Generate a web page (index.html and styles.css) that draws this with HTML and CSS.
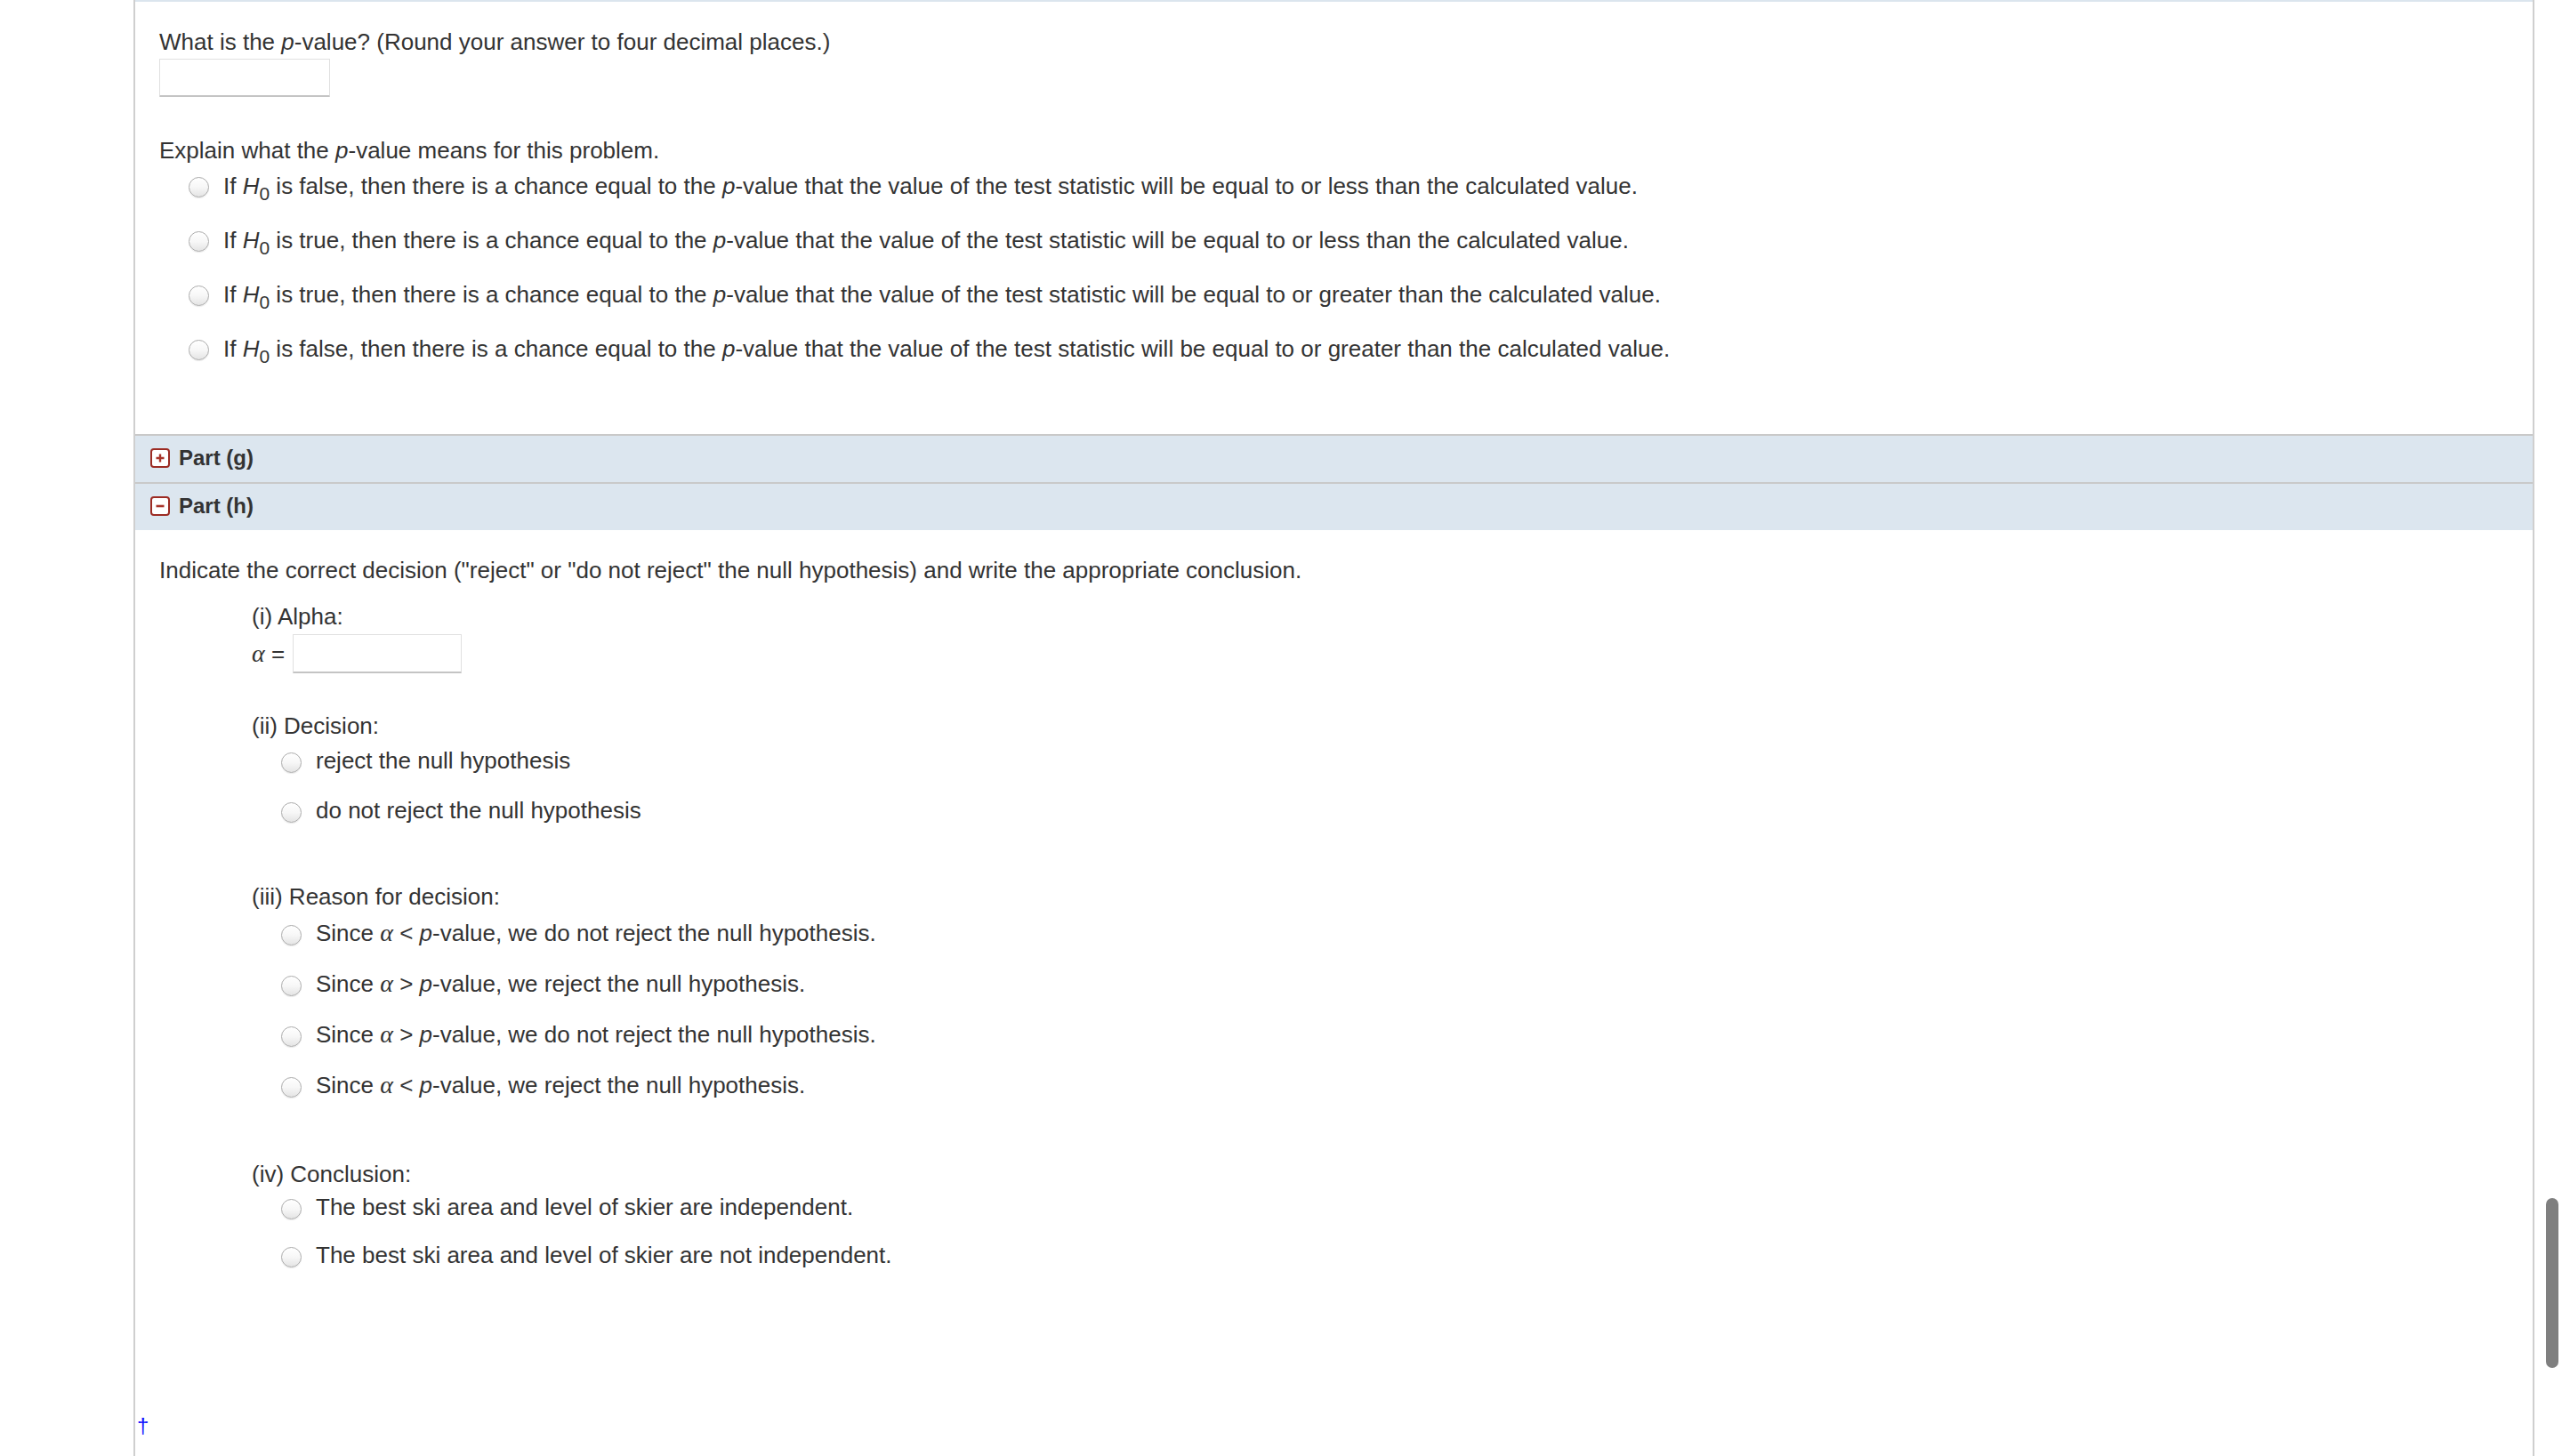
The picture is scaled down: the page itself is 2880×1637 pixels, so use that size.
FILE: index.html
```html
<!DOCTYPE html>
<html lang="en">
<head>
<meta charset="utf-8">
<title>Part (h)</title>
<link rel="stylesheet" href="styles.css">
</head>
<body>
<div class="frame">
  <div class="topstrip"></div>

  <section class="part-body first">
    <p class="line">What is the <i>p</i>-value? (Round your answer to four decimal places.)</p>
    <input class="answer answer-p" type="text" aria-label="p-value">
    <p class="line explain">Explain what the <i>p</i>-value means for this problem.</p>
    <ul class="opts opts-explain">
      <li class="opt"><input class="radio" type="radio" name="pm"><span>If <i>H</i><sub>0</sub> is false, then there is a chance equal to the <i>p</i>-value that the value of the test statistic will be equal to or less than the calculated value.</span></li>
      <li class="opt"><input class="radio" type="radio" name="pm"><span>If <i>H</i><sub>0</sub> is true, then there is a chance equal to the <i>p</i>-value that the value of the test statistic will be equal to or less than the calculated value.</span></li>
      <li class="opt"><input class="radio" type="radio" name="pm"><span>If <i>H</i><sub>0</sub> is true, then there is a chance equal to the <i>p</i>-value that the value of the test statistic will be equal to or greater than the calculated value.</span></li>
      <li class="opt"><input class="radio" type="radio" name="pm"><span>If <i>H</i><sub>0</sub> is false, then there is a chance equal to the <i>p</i>-value that the value of the test statistic will be equal to or greater than the calculated value.</span></li>
    </ul>
  </section>

  <div class="part-head">
    <svg class="toggle" viewBox="0 0 22 22" width="22" height="22"><rect x="1" y="1" width="20" height="20" rx="3" fill="#fff" stroke="#9c2b23" stroke-width="2"/><path d="M6.5 11h9M11 6.5v9" stroke="#a8342a" stroke-width="2.4" fill="none"/></svg>
    <span class="part-title">Part (g)</span>
  </div>
  <div class="part-head">
    <svg class="toggle" viewBox="0 0 22 22" width="22" height="22"><rect x="1" y="1" width="20" height="20" rx="3" fill="#fff" stroke="#9c2b23" stroke-width="2"/><path d="M6.5 11h9" stroke="#a8342a" stroke-width="2.6" fill="none"/></svg>
    <span class="part-title">Part (h)</span>
  </div>

  <section class="part-body second">
    <p class="line">Indicate the correct decision ("reject" or "do not reject" the null hypothesis) and write the appropriate conclusion.</p>
    <div class="steps">
      <p class="line step-alpha">(i) Alpha:</p>
      <div class="alpha-row">
        <span class="alpha-label"><span class="alpha">α</span> =</span>
        <input class="answer answer-alpha" type="text" aria-label="alpha">
      </div>

      <p class="line step-decision">(ii) Decision:</p>
      <ul class="opts opts-decision">
        <li class="opt"><input class="radio" type="radio" name="dec"><span>reject the null hypothesis</span></li>
        <li class="opt"><input class="radio" type="radio" name="dec"><span>do not reject the null hypothesis</span></li>
      </ul>

      <p class="line step-reason">(iii) Reason for decision:</p>
      <ul class="opts opts-reason">
        <li class="opt"><input class="radio" type="radio" name="rea"><span>Since <span class="alpha">α</span> &lt; <i>p</i>-value, we do not reject the null hypothesis.</span></li>
        <li class="opt"><input class="radio" type="radio" name="rea"><span>Since <span class="alpha">α</span> &gt; <i>p</i>-value, we reject the null hypothesis.</span></li>
        <li class="opt"><input class="radio" type="radio" name="rea"><span>Since <span class="alpha">α</span> &gt; <i>p</i>-value, we do not reject the null hypothesis.</span></li>
        <li class="opt"><input class="radio" type="radio" name="rea"><span>Since <span class="alpha">α</span> &lt; <i>p</i>-value, we reject the null hypothesis.</span></li>
      </ul>

      <p class="line step-concl">(iv) Conclusion:</p>
      <ul class="opts opts-concl">
        <li class="opt"><input class="radio" type="radio" name="con"><span>The best ski area and level of skier are independent.</span></li>
        <li class="opt"><input class="radio" type="radio" name="con"><span>The best ski area and level of skier are not independent.</span></li>
      </ul>
    </div>
  </section>

  <div class="dagger">†</div>
</div>
<div class="scroll-thumb"></div>
</body>
</html>
```

FILE: styles.css
```css
html, body {
  margin: 0;
  padding: 0;
  background: #ffffff;
  overflow: hidden;
}

body {
  font-family: "Liberation Sans", Arial, Helvetica, sans-serif;
  font-size: 26px;
  color: #333333;
}

.frame {
  box-sizing: border-box;
  margin-left: 150px;
  width: 2699px;
  height: 1637px;
  border-left: 2px solid #cfcfcf;
  border-right: 2px solid #cfcfcf;
  overflow: hidden;
}

.topstrip {
  height: 2px;
  background: #dbe5ee;
}

.part-body {
  padding-left: 27px;
}

.part-body.first {
  padding-top: 30px;
  padding-bottom: 81px;
}

.part-body.second {
  padding-top: 30px;
}

.line {
  margin: 0;
  line-height: 30px;
}

i {
  font-style: italic;
}

sub {
  font-size: 21px;
  line-height: 0;
  vertical-align: -7px;
  font-style: normal;
}

.answer {
  display: block;
  box-sizing: border-box;
  margin: 0;
  padding: 0 8px;
  border: 1px solid #e0e0e0;
  border-bottom: 2px solid #c4c4c4;
  border-radius: 1px;
  background: #ffffff;
  font: inherit;
  outline: none;
}

.answer-p {
  margin-top: 4px;
  width: 192px;
  height: 43px;
}

.explain {
  margin-top: 45px;
}

.opts {
  list-style: none;
  margin: 0;
  padding: 0;
}

.opt {
  display: flex;
  align-items: flex-start;
  line-height: 30px;
}

.radio {
  -webkit-appearance: none;
  appearance: none;
  box-sizing: border-box;
  flex: none;
  width: 23px;
  height: 23px;
  margin: 6px 16px 0 33px;
  border: 1px solid #ababab;
  border-radius: 50%;
  background: linear-gradient(#ffffff 0%, #f7f7f7 50%, #e4e4e4 100%);
  box-shadow: inset 0 1px 1px rgba(255, 255, 255, 0.9), 0 1px 1px rgba(0, 0, 0, 0.08);
}

.opts-explain {
  margin-top: 10px;
}

.opts-explain .opt + .opt {
  margin-top: 31px;
}

.opts-explain .radio {
  margin-top: 5px;
}

.part-head {
  display: flex;
  align-items: flex-start;
  height: 42px;
  padding-top: 10px;
  border-top: 2px solid #c9c9c9;
  background: #dce6ef;
}

.toggle {
  flex: none;
  margin: 4px 10px 0 17px;
}

.part-title {
  font-weight: bold;
  font-size: 24px;
  line-height: 30px;
  color: #333333;
}

.steps {
  margin-left: 104px;
}

.step-alpha {
  margin-top: 22px;
}

.alpha-row {
  display: flex;
  align-items: center;
  margin-top: 5px;
  height: 44px;
}

.alpha-label {
  line-height: 30px;
  margin-right: 9px;
}

.alpha {
  font-family: "Liberation Serif", "Times New Roman", serif;
  font-style: italic;
  font-size: 28px;
}

.answer-alpha {
  width: 190px;
  height: 44px;
}

.step-decision {
  margin-top: 44px;
}

.opts-decision {
  margin-top: 9px;
}

.opts-decision .opt + .opt {
  margin-top: 26px;
}

.step-reason {
  margin-top: 67px;
}

.opts-reason {
  margin-top: 11px;
}

.opts-reason .opt + .opt {
  margin-top: 27px;
}

.step-concl {
  margin-top: 70px;
}

.opts-concl {
  margin-top: 7px;
}

.opts-concl .opt + .opt {
  margin-top: 24px;
}

.dagger {
  margin-top: 165px;
  margin-left: 2px;
  font-size: 24px;
  line-height: 24px;
  color: #1414ff;
}

.scroll-thumb {
  position: fixed;
  left: 2862px;
  top: 1347px;
  width: 14px;
  height: 191px;
  border-radius: 7px;
  background: #7f7f7f;
}
```
